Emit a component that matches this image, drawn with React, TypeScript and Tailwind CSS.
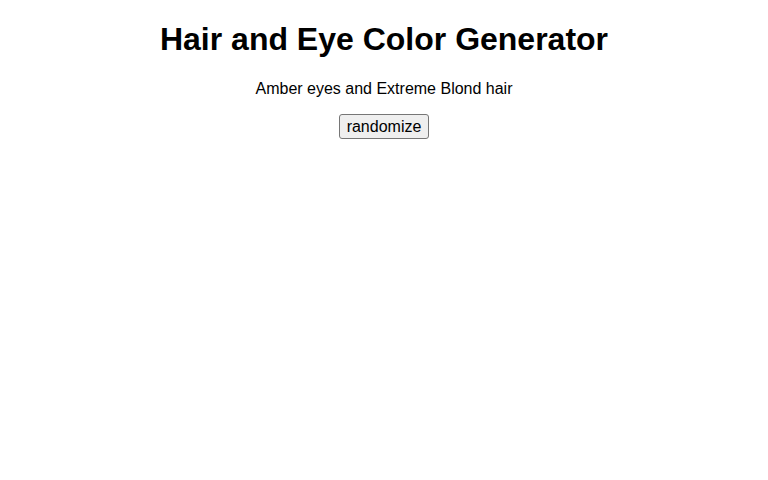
import React, { useState } from "react";

const EYES = ["Amber", "Blue", "Brown", "Gray", "Green", "Hazel"];
const HAIR = ["Extreme Blond", "Black", "Brown", "Auburn", "Red", "Gray"];

export default function App() {
  const [pick, setPick] = useState({ eye: "Amber", hair: "Extreme Blond" });

  const randomize = () => {
    setPick({
      eye: EYES[Math.floor(Math.random() * EYES.length)],
      hair: HAIR[Math.floor(Math.random() * HAIR.length)],
    });
  };

  return (
    <div className="text-center text-black bg-white min-h-[480px] font-['Liberation_Sans',Arial,sans-serif] flow-root">
      <h1 className="text-[32px] font-bold my-[21.44px] leading-[37px]">
        Hair and Eye Color Generator
      </h1>
      <p className="text-[16px] my-4 leading-[18px]">
        {pick.eye} eyes and {pick.hair} hair
      </p>
      <button
        onClick={randomize}
        className="text-[16px] leading-[19px] px-[7px] py-[2px] bg-[#efefef] border border-[#767676] rounded-[3px] hover:bg-[#e5e5e5]"
      >
        randomize
      </button>
    </div>
  );
}
